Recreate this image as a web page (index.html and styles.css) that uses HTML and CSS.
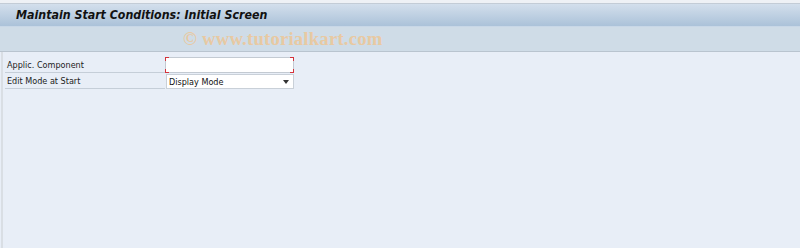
FILE: index.html
```html
<!DOCTYPE html>
<html lang="en">
<head>
<meta charset="UTF-8">
<title>Maintain Start Conditions: Initial Screen</title>
<link rel="stylesheet" href="styles.css">
</head>
<body>
<div class="top-strip"></div>
<div class="title-bar">
<h1>Maintain Start Conditions: Initial Screen</h1>
</div>
<div class="toolbar">
<span class="watermark">&copy; www.tutorialkart.com</span>
</div>
<div class="screen">
<div class="row">
<label class="field-label" for="appl_comp">Applic. Component</label>
<div class="input-wrap required">
<input type="text" id="appl_comp" class="field-input">
</div>
</div>
<div class="row">
<label class="field-label" for="edit_mode">Edit Mode at Start</label>
<div class="select-box" id="edit_mode">
<span>Display Mode</span>
<span class="arrow"></span>
</div>
</div>
</div>
</body>
</html>
```
FILE: styles.css
```css
html, body {
    height: 100%;
}
body {
    margin: 0;
    background-color: #e8eef7;
    font-family: "DejaVu Sans Condensed", "DejaVu Sans", sans-serif;
    font-size: 9px;
    color: #222;
    display: flex;
    flex-direction: column;
}
.top-strip {
    height: 3px;
    background-color: #eef1f5;
    border-bottom: 1px solid #c3ccd6;
}
.title-bar {
    height: 22px;
    background: linear-gradient(#d3dfec, #abc2d9);
    display: flex;
    align-items: center;
    padding-left: 16px;
}
h1 {
    margin: 0;
    font-size: 12.3px;
    font-weight: bold;
    font-style: italic;
    color: #111;
}
.toolbar {
    height: 24px;
    background-color: #cfdce7;
    border-top: 1px solid #c8d7e7;
    border-bottom: 1px solid #b9c4cf;
    display: flex;
    align-items: center;
    padding-left: 183px;
}
.watermark {
    font-family: "Liberation Serif", serif;
    font-weight: bold;
    font-size: 18.7px;
    color: #e8c9a2;
    letter-spacing: 0.2px;
}
.screen {
    flex: 1;
    border-left: 2px solid #d9dee4;
    margin-left: 1px;
    padding: 5px 0 0 2px;
}
.row {
    display: flex;
    height: 16px;
    align-items: stretch;
}
.field-label {
    width: 158px;
    padding-left: 2px;
    border-bottom: 1px solid #c5ced8;
    display: flex;
    align-items: center;
    padding-top: 1px;
    color: #222;
}
.input-wrap {
    width: 129px;
    height: 16px;
    padding: 1px;
    box-sizing: border-box;
}
.required {
    background:
        linear-gradient(#d4333c, #d4333c) left top / 4px 1px no-repeat,
        linear-gradient(#d4333c, #d4333c) left top / 1px 4px no-repeat,
        linear-gradient(#d4333c, #d4333c) right top / 4px 1px no-repeat,
        linear-gradient(#d4333c, #d4333c) right top / 1px 4px no-repeat,
        linear-gradient(#d4333c, #d4333c) left bottom / 4px 1px no-repeat,
        linear-gradient(#d4333c, #d4333c) left bottom / 1px 4px no-repeat,
        linear-gradient(#d4333c, #d4333c) right bottom / 4px 1px no-repeat,
        linear-gradient(#d4333c, #d4333c) right bottom / 1px 4px no-repeat,
        #c3cad2;
}
.field-input {
    box-sizing: border-box;
    display: block;
    width: 100%;
    height: 100%;
    margin: 0;
    padding: 0 2px;
    border: none;
    background: #fff;
    outline: none;
    font: inherit;
}
.select-box {
    box-sizing: border-box;
    width: 128px;
    height: 15px;
    margin-left: 1px;
    margin-top: 1px;
    background: #fff;
    border: 1px solid #c9d0d8;
    display: flex;
    align-items: center;
    justify-content: space-between;
    padding: 0 4px 0 2px;
    color: #111;
}
.arrow {
    width: 0;
    height: 0;
    border-left: 3.5px solid transparent;
    border-right: 3.5px solid transparent;
    border-top: 4px solid #333;
}
```
